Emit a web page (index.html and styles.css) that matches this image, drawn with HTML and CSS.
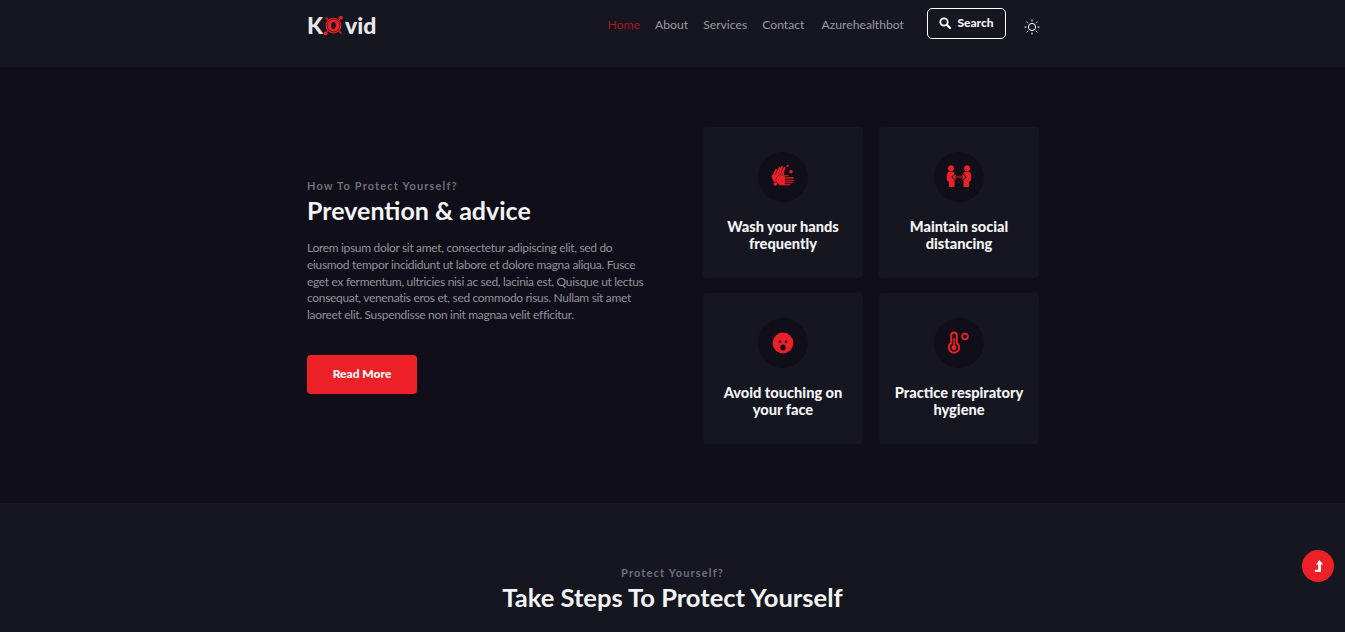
FILE: index.html
```html
<!DOCTYPE html>
<html lang="en">

<head>
    <meta charset="UTF-8">
    <meta name="viewport" content="width=device-width, initial-scale=1.0">
    <title>Kovid</title>
    <link rel="stylesheet" href="styles.css">
</head>

<body>

    <header class="topbar">
        <div class="topbar-inner">
            <a class="logo" href="#">
                <span>K</span>
                <svg class="logo-mark" viewBox="0 0 24 24" width="21" height="21">
                    <path d="M3 21 21 3M3 3l3 3M18 18l3 3" stroke="#ed2027" stroke-width="1.200" fill="none"/>
                    <circle cx="12" cy="12" r="9" fill="#ed2027"/>
                    <circle cx="12" cy="12" r="7.300" fill="none" stroke="#151620" stroke-width=".7"/>
                    <ellipse cx="12" cy="12" rx="2.600" ry="4" fill="#151620"/>
                    <circle cx="20.500" cy="3" r="2.200" fill="#ed2027"/>
                    <circle cx="3" cy="21" r="2.200" fill="#ed2027"/>
                    <circle cx="4" cy="4" r="1.200" fill="#ed2027"/>
                    <circle cx="20" cy="20" r="1.200" fill="#ed2027"/>
                </svg>
                <span>vid</span>
            </a>
            <nav class="menu">
                <a class="active" href="#">Home</a>
                <a href="#">About</a>
                <a href="#">Services</a>
                <a href="#">Contact</a>
                <a class="menu-last" href="#">Azurehealthbot</a>
            </nav>
            <button class="search-btn">
                <svg viewBox="0 0 12 12" width="12" height="12">
                    <circle cx="5" cy="5" r="3.700" fill="none" stroke="#fff" stroke-width="1.800"/>
                    <path d="M7.800 7.800 11 11" stroke="#fff" stroke-width="2.200" stroke-linecap="round"/>
                </svg>
                Search
            </button>
            <svg class="sun" viewBox="0 0 16 16" width="16" height="16">
                <circle cx="8" cy="8" r="3.600" fill="none" stroke="#fff" stroke-width="1"/>
                <path d="M8 .5v2M8 13.500v2M.5 8h2M13.500 8h2M2.700 2.700l1.400 1.400M11.900 11.900l1.400 1.400M2.700 13.300l1.400-1.400M11.900 4.100l1.400-1.400" stroke="#fff" stroke-width="1" fill="none"/>
            </svg>
        </div>
    </header>

    <section class="hero">
        <div class="hero-inner">
            <div class="hero-text">
                <p class="eyebrow">How To Protect Yourself?</p>
                <h2 class="title">Prevention &amp; advice</h2>
                <p class="lead">Lorem ipsum dolor sit amet, consectetur adipiscing elit, sed do eiusmod tempor incididunt ut labore et dolore magna aliqua. Fusce eget ex fermentum, ultricies nisi ac sed, lacinia est. Quisque ut lectus consequat, venenatis eros et, sed commodo risus. Nullam sit amet laoreet elit. Suspendisse non init magnaa velit efficitur.</p>
                <a class="read-more" href="#">Read More</a>
            </div>
            <div class="cards">
                <div class="card">
                    <div class="card-icon">
                        <svg viewBox="0 0 24 24" width="24" height="24" fill="#ed2027">
                            <path d="M3 10 5 5M6 9l2.500-6M8.500 9 11 2M11 9l2.500-6" fill="none" stroke="#ed2027" stroke-width="2" stroke-linecap="round"/>
                            <path d="M1 10l12-2v2H8l-3 3 1 4H3l-2-4z"/>
                            <path stroke="#0f0e19" stroke-width=".4" d="M5 13l3-3h9c1 0 1 1.500 0 1.500h-3v.5h8c1.500 0 1.500 1.800 0 1.800h-8v.6h8.500c1.300 0 1.300 1.600 0 1.600H14v.6h7c1.300 0 1.300 1.600 0 1.600h-7v.6h4.500c1.200 0 1.200 1.600 0 1.600H9l-4-3.400z"/>
                            <circle cx="16.700" cy="1" r="1.100"/>
                            <circle cx="20" cy="6.700" r="1.700"/>
                            <circle cx="4.300" cy="19" r="1.800"/>
                        </svg>
                    </div>
                    <h3>Wash your hands frequently</h3>
                </div>
                <div class="card">
                    <div class="card-icon">
                        <svg viewBox="0 0 24 24" width="24" height="24" fill="#ed2027">
                            <circle cx="4" cy="3.300" r="3"/>
                            <circle cx="20" cy="3.300" r="3"/>
                            <path d="M0 9.500C0 7.500 1.500 6.500 3.500 6.500H5c1.500 0 2.500 1 3 2.500l-2.500 3L8 15l-.5 1v6H2v-5l-2-1.500z"/>
                            <path transform="matrix(-1 0 0 1 24 0)" d="M0 9.500C0 7.500 1.500 6.500 3.500 6.500H5c1.500 0 2.500 1 3 2.500l-2.500 3L8 15l-.5 1v6H2v-5l-2-1.500z"/>
                            <path d="M8.700 9.700 6.300 12l2.400 2.300M15.300 9.700l2.400 2.300-2.400 2.300M6.500 12h11" fill="none" stroke="#0f0e19" stroke-width="2.800"/>
                            <path d="M8.700 9.700 6.300 12l2.400 2.300M15.300 9.700l2.400 2.300-2.400 2.300M6.500 12h11" fill="none" stroke="#ed2027" stroke-width="1.200"/>
                        </svg>
                    </div>
                    <h3>Maintain social distancing</h3>
                </div>
                <div class="card">
                    <div class="card-icon">
                        <svg viewBox="0 0 24 24" width="24" height="24">
                            <circle cx="12" cy="12" r="10.400" fill="#ed2027"/>
                            <circle cx="9" cy="10.700" r="1.200" fill="#0f0e19"/>
                            <circle cx="15" cy="10.700" r="1.200" fill="#0f0e19"/>
                            <ellipse cx="12" cy="16.500" rx="2.700" ry="3" fill="#0f0e19"/>
                        </svg>
                    </div>
                    <h3>Avoid touching on your face</h3>
                </div>
                <div class="card">
                    <div class="card-icon">
                        <svg viewBox="0 0 24 24" width="24" height="24">
                            <path d="M4.200 4.300a2.800 2.800 0 0 1 5.600 0v7.800a5.200 5.200 0 1 1-5.600 0z" fill="none" stroke="#ed2027" stroke-width="2"/>
                            <circle cx="7" cy="16.500" r="2.500" fill="#ed2027"/>
                            <path d="M7 7v9" stroke="#ed2027" stroke-width="1.600"/>
                            <circle cx="18" cy="5.500" r="2.900" fill="none" stroke="#ed2027" stroke-width="1.800"/>
                        </svg>
                    </div>
                    <h3>Practice respiratory hygiene</h3>
                </div>
            </div>
        </div>
    </section>

    <section class="steps">
        <p class="eyebrow">Protect Yourself?</p>
        <h2 class="title">Take Steps To Protect Yourself</h2>
    </section>

    <a class="to-top" href="#">
        <svg viewBox="0 0 10 12" width="10" height="12">
            <path d="M6.500 0 10 4.500H8V12H2V9.800H5V4.500H3z" fill="#fff"/>
        </svg>
    </a>

</body>

</html>
```

FILE: styles.css
```css
* {
    margin: 0;
    padding: 0;
    box-sizing: border-box;
}

body {
    font-family: 'Lato', sans-serif;
    background: #151620;
    color: #fff;
}

a {
    text-decoration: none;
    color: inherit;
}

.topbar {
    height: 67px;
}

.topbar-inner {
    width: 733px;
    margin-left: 307px;
    height: 50px;
    display: flex;
    align-items: center;
}

.logo {
    display: flex;
    align-items: center;
    font-size: 23px;
    font-weight: 900;
    color: #e8e8ea;
}

.logo-mark {
    margin: 0 1px 0 0;
}

.menu {
    display: flex;
    margin-left: auto;
    padding-bottom: 2px;
    gap: 15px;
    font-size: 12.2px;
    color: #9a9aa0;
}

.menu .active {
    color: #a81820;
}

.menu-last {
    margin-left: 2px;
}

.search-btn {
    margin-left: 23px;
    width: 79px;
    height: 31px;
    padding-bottom: 2px;
    display: flex;
    align-items: center;
    justify-content: center;
    gap: 6px;
    font-family: inherit;
    font-size: 12px;
    font-weight: 900;
    color: #f0f0f0;
    background: transparent;
    border: 1px solid #fff;
    border-radius: 5px;
    cursor: pointer;
    margin-top: -3px;
}

.sun {
    margin-left: 18px;
    margin-top: 3px;
}

.hero {
    height: 436px;
    background: #0f0e19;
}

.hero-inner {
    margin-left: 307px;
    width: 732px;
    display: flex;
    justify-content: space-between;
}

.hero-text {
    width: 340px;
    padding-top: 112px;
}

.eyebrow {
    font-size: 11px;
    font-weight: 700;
    letter-spacing: 1.15px;
    color: #6f7075;
    line-height: 14px;
}

.title {
    font-size: 25px;
    font-weight: 700;
    line-height: 34px;
    color: #f4f4f6;
}

.lead {
    margin-top: 13px;
    font-size: 12px;
    letter-spacing: -0.32px;
    line-height: 16.800px;
    color: #929297;
}

.read-more {
    display: flex;
    align-items: center;
    justify-content: center;
    width: 110px;
    height: 39px;
    padding-bottom: 2px;
    margin-top: 31px;
    background: #ed2027;
    border-radius: 4px;
    font-size: 12px;
    font-weight: 900;
}

.cards {
    display: grid;
    grid-template-columns: 160px 160px;
    grid-auto-rows: 151px;
    gap: 15px 16px;
    padding-top: 60px;
}

.card {
    background: #151620;
    border-radius: 4px;
    padding-top: 25px;
    text-align: center;
}

.card-icon {
    width: 50px;
    height: 50px;
    margin: 0 auto;
    background: #0f0e19;
    border-radius: 50%;
    display: flex;
    align-items: center;
    justify-content: center;
}

.card h3 {
    margin: 16px auto 0;
    width: 140px;
    font-size: 14.6px;
    font-weight: 900;
    line-height: 17px;
    color: #f4f4f6;
}

.steps {
    padding-top: 63px;
    text-align: center;
}

.steps .title {
    font-size: 25.5px;
}

.to-top {
    position: fixed;
    right: 11px;
    bottom: 50px;
    width: 32px;
    height: 32px;
    background: #ed2027;
    border-radius: 50%;
    display: flex;
    align-items: center;
    justify-content: center;
}
```
